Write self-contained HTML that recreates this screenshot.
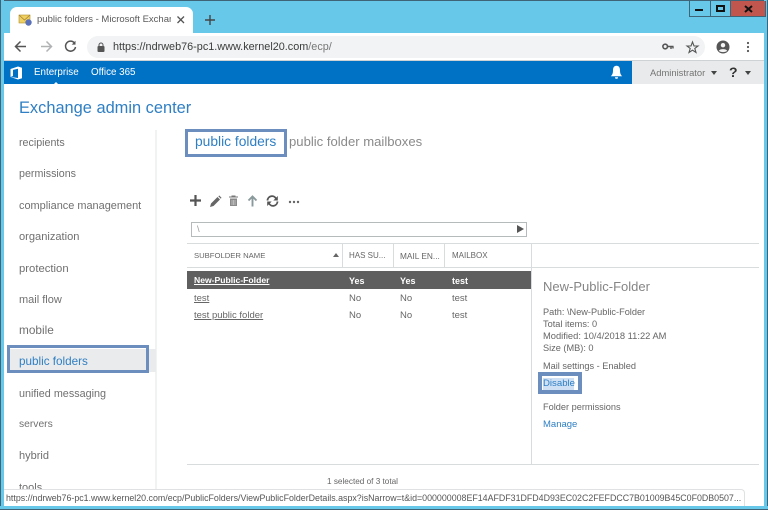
<!DOCTYPE html>
<html><head><meta charset="utf-8"><style>
html,body{margin:0;padding:0;width:768px;height:510px;overflow:hidden;background:#fff}
*{box-sizing:border-box}
body{font-family:"Liberation Sans",sans-serif;position:relative;filter:blur(.3px)}
.a{position:absolute;white-space:nowrap}
.nav{position:absolute;left:19px;font-size:11px;color:#707070;white-space:nowrap;line-height:16px}
.t{position:absolute;font-size:9.5px;line-height:12px;color:#666;white-space:nowrap}
.b{position:absolute;background:#d9dcdc}
.d{position:absolute;left:543px;font-size:9.2px;line-height:12px;color:#666;white-space:nowrap}
.hl{position:absolute;border:3px solid #6c8ebf}
svg{position:absolute;overflow:visible}
</style></head><body>
<!-- window frame -->
<div class="a" style="left:0;top:0;width:768px;height:33px;background:#67c8ea"></div>
<div class="a" style="left:0;top:0;width:768px;height:1px;background:#3f6478"></div>
<div class="a" style="left:0;top:0;width:4px;height:510px;background:#67c8ea"></div>
<div class="a" style="left:0;top:0;width:1px;height:510px;background:#3f6478"></div>
<div class="a" style="left:764px;top:0;width:4px;height:510px;background:#67c8ea"></div>
<div class="a" style="left:767px;top:0;width:1px;height:510px;background:#3f6478"></div>
<div class="a" style="left:0;top:506px;width:768px;height:4px;background:#67c8ea"></div>
<div class="a" style="left:0;top:509px;width:768px;height:1px;background:#3f6478"></div>
<!-- window buttons -->
<div class="a" style="left:689px;top:1px;width:22px;height:16px;background:#67c8ea;border:1px solid #3f6478;border-top:0"></div>
<div class="a" style="left:695px;top:9px;width:8px;height:2px;background:#111"></div>
<div class="a" style="left:710px;top:1px;width:21px;height:16px;background:#67c8ea;border:1px solid #3f6478;border-top:0"></div>
<div class="a" style="left:716px;top:5px;width:9px;height:7px;border:2px solid #111"></div>
<div class="a" style="left:731px;top:1px;width:35px;height:16px;background:#c0564e;border-bottom:1px solid #3f6478;border-right:1px solid #3f6478"></div>
<svg style="left:744px;top:5px" width="10" height="8"><path d="M1 1L8 7M8 1L1 7" stroke="#111" stroke-width="2" fill="none"/></svg>
<!-- tab -->
<div class="a" style="left:10px;top:7px;width:183px;height:27px;background:#fff;border-radius:7px 7px 0 0"></div>
<svg style="left:19px;top:14px" width="14" height="13"><rect x="0" y="1" width="11" height="8" fill="#f0d060" stroke="#b09030" stroke-width=".6"/><path d="M0 1L5.5 6L11 1" stroke="#a08030" stroke-width=".7" fill="none"/><circle cx="9.5" cy="8.5" r="3.2" fill="#5a70b8"/></svg>
<div class="a" style="left:37px;top:13px;font-size:9.5px;line-height:14px;color:#5a5a5a;width:134px;overflow:hidden">public folders - Microsoft Exchan</div>
<svg style="left:176px;top:15px" width="10" height="10"><path d="M1.5 1.5L8 8M8 1.5L1.5 8" stroke="#555" stroke-width="1.3" fill="none"/></svg>
<svg style="left:204px;top:14px" width="12" height="12"><path d="M6 1V11M1 6H11" stroke="#444" stroke-width="1.4" fill="none"/></svg>
<!-- toolbar -->
<div class="a" style="left:4px;top:33px;width:760px;height:28px;background:#fff;border-bottom:1px solid #cfd2d4"></div>
<svg style="left:14px;top:40px" width="13" height="13"><path d="M12 6.5H2M6.5 1.5L1.5 6.5L6.5 11.5" stroke="#555" stroke-width="1.5" fill="none"/></svg>
<svg style="left:40px;top:40px" width="13" height="13"><path d="M1 6.5H11M6.5 1.5L11.5 6.5L6.5 11.5" stroke="#b0b2b4" stroke-width="1.5" fill="none"/></svg>
<svg style="left:64px;top:40px" width="13" height="13"><path d="M10.6 3.2A5 5 0 1 0 11.5 7" stroke="#555" stroke-width="1.5" fill="none"/><path d="M11.5 0.8V4.6H7.7Z" fill="#555"/></svg>
<div class="a" style="left:87px;top:36px;width:618px;height:22px;background:#f1f3f4;border-radius:11px"></div>
<svg style="left:97px;top:42px" width="9" height="11"><rect x="0.5" y="4" width="7" height="6" rx="1" fill="#555"/><path d="M2 4V3A2 2 0 0 1 6 3V4" stroke="#555" fill="none"/></svg>
<div class="a" style="left:113px;top:40px;font-size:10.85px;line-height:14px;color:#3c3c3c">https://ndrweb76-pc1.www.kernel20.com<span style="color:#777">/ecp/</span></div>
<svg style="left:662px;top:43px" width="12" height="8"><circle cx="3.2" cy="3.5" r="2.3" fill="none" stroke="#555" stroke-width="1.6"/><path d="M5 3.5H11.5M9 3.5V6M11 3.5V5.5" stroke="#555" stroke-width="1.4" fill="none"/></svg>
<svg style="left:686px;top:41px" width="13" height="13"><path d="M6.5 1L8 5H12L8.8 7.5L10 11.5L6.5 9.2L3 11.5L4.2 7.5L1 5H5Z" fill="none" stroke="#555" stroke-width="1.1"/></svg>
<svg style="left:716px;top:40px" width="14" height="14"><circle cx="7" cy="7" r="6.5" fill="#555"/><circle cx="7" cy="5.2" r="2.2" fill="#f4f4f4"/><path d="M2.8 10.8C4 8.5 10 8.5 11.2 10.8C9.5 12.6 4.5 12.6 2.8 10.8Z" fill="#f4f4f4"/></svg>
<svg style="left:746px;top:41px" width="4" height="12"><circle cx="2" cy="2" r="1.1" fill="#555"/><circle cx="2" cy="6" r="1.1" fill="#555"/><circle cx="2" cy="10" r="1.1" fill="#555"/></svg>
<!-- suite bar -->
<div class="a" style="left:4px;top:61px;width:628px;height:23px;background:#0072c6"></div>
<div class="a" style="left:632px;top:61px;width:132px;height:23px;background:#e9eaeb"></div>
<svg style="left:10px;top:66px" width="13" height="14"><path d="M0.5 3L8 0.5L12 1.7V12.3L8 13.5L0.5 11L8 12V2.8L3 3.9V10L0.5 11Z" fill="#fff"/></svg>
<div class="a" style="left:34px;top:66px;font-size:9.8px;line-height:14px;color:#fff">Enterprise</div>
<div class="a" style="left:91px;top:66px;font-size:9.8px;line-height:14px;color:#fff">Office 365</div>
<div class="a" style="left:53px;top:82px;width:0;height:0;border:3px solid transparent;border-top:0;border-bottom-color:#fff"></div>
<svg style="left:610px;top:65px" width="13" height="15"><path d="M6.5 0.8C3.8 0.8 3 3 3 5.5C3 8.5 2.2 10 0.8 11.3H12.2C10.8 10 10 8.5 10 5.5C10 3 9.2 0.8 6.5 0.8Z" fill="#fff"/><path d="M5 12.2H8A1.5 1.6 0 0 1 5 12.2Z" fill="#fff"/></svg>
<div class="a" style="left:650px;top:66px;font-size:9.4px;line-height:13px;color:#747474">Administrator</div>
<div class="a" style="left:711px;top:71px;width:0;height:0;border:3px solid transparent;border-bottom:0;border-top:4px solid #444"></div>
<div class="a" style="left:729px;top:63px;font-size:14px;font-weight:bold;line-height:18px;color:#333">?</div>
<div class="a" style="left:745px;top:71px;width:0;height:0;border:3px solid transparent;border-bottom:0;border-top:4px solid #444"></div>
<!-- content -->
<div class="a" style="left:19px;top:98px;font-size:16.4px;line-height:21px;color:#2f7fc4">Exchange admin center</div>
<div class="a" style="left:155px;top:130px;width:2px;height:376px;background:#f1f2f2"></div>
<div class="nav" style="top:135px;font-size:10.7px">recipients</div>
<div class="nav" style="top:166px;font-size:10.7px">permissions</div>
<div class="nav" style="top:198px;font-size:10.95px">compliance management</div>
<div class="nav" style="top:229px;font-size:11.1px">organization</div>
<div class="nav" style="top:261px;font-size:11.3px">protection</div>
<div class="nav" style="top:292px;font-size:11px">mail flow</div>
<div class="nav" style="top:322px;font-size:11.8px">mobile</div>
<div class="a" style="left:8px;top:349px;width:148px;height:23px;background:#eaebec"></div>
<div class="hl" style="left:7px;top:345px;width:142px;height:28px"></div>
<div class="nav" style="top:354px;color:#2f7fc4;font-size:11.7px">public folders</div>
<div class="nav" style="top:386px;font-size:10.8px">unified messaging</div>
<div class="nav" style="top:417px;font-size:10.3px">servers</div>
<div class="nav" style="top:448px;font-size:11px">hybrid</div>
<div class="nav" style="top:480px;font-size:11px">tools</div>
<!-- tabs -->
<div class="hl" style="left:185px;top:129px;width:102px;height:28px;border-width:3px"></div>
<div class="a" style="left:195px;top:133px;font-size:13.8px;line-height:17px;color:#2f7fc4">public folders</div>
<div class="a" style="left:289px;top:133px;font-size:13.1px;line-height:17px;color:#8a8a8a">public folder mailboxes</div>
<!-- action icons -->
<svg style="left:189px;top:194px" width="13" height="13"><path d="M6.5 1V12M1 6.5H12" stroke="#555" stroke-width="2.2" fill="none"/></svg>
<svg style="left:209px;top:195px" width="13" height="13"><path d="M1 12L2 8.5L8.5 2L11 4.5L4.5 11Z" fill="#666"/><path d="M9.3 1.2L10.3 .5L12.5 2.7L11.8 3.7Z" fill="#666"/></svg>
<svg style="left:228px;top:195px" width="11" height="12"><path d="M1 2H10M4 2V1H7V2" stroke="#777" fill="none"/><path d="M2 3.5H9V11H2Z" fill="#8a8a8a"/><path d="M4 5V10M5.5 5V10M7 5V10" stroke="#ddd" stroke-width=".6"/></svg>
<svg style="left:247px;top:195px" width="11" height="12"><path d="M5.5 11.5V2M1.5 5.5L5.5 1.5L9.5 5.5" stroke="#8a9a9c" stroke-width="1.9" fill="none"/></svg>
<svg style="left:266px;top:195px" width="13" height="12"><path d="M1.5 5.5A4.5 4.5 0 0 1 10 3.6" stroke="#555" stroke-width="1.8" fill="none"/><path d="M11.8 1V5.5H7.3Z" fill="#555"/><path d="M11.5 6.5A4.5 4.5 0 0 1 3 8.4" stroke="#555" stroke-width="1.8" fill="none"/><path d="M1.2 11V6.5H5.7Z" fill="#555"/></svg>
<svg style="left:288px;top:200px" width="12" height="4"><circle cx="2" cy="2" r="1.2" fill="#666"/><circle cx="6" cy="2" r="1.2" fill="#666"/><circle cx="10" cy="2" r="1.2" fill="#666"/></svg>
<!-- path box -->
<div class="a" style="left:191px;top:222px;width:336px;height:15px;border:1px solid #b5baba;background:#fff"></div>
<div class="a" style="left:197px;top:224px;font-size:9.5px;line-height:11px;color:#999">\</div>
<div class="a" style="left:517px;top:225px;width:0;height:0;border-left:7px solid #555;border-top:4.5px solid transparent;border-bottom:4.5px solid transparent"></div>
<!-- grid header -->
<div class="b" style="left:187px;top:243px;width:572px;height:1px"></div>
<div class="b" style="left:187px;top:267px;width:572px;height:1px"></div>
<div class="b" style="left:342px;top:243px;width:1px;height:24px"></div>
<div class="b" style="left:393px;top:243px;width:1px;height:24px"></div>
<div class="b" style="left:444px;top:243px;width:1px;height:24px"></div>
<div class="b" style="left:531px;top:243px;width:1px;height:221px"></div>
<div class="t" style="left:194px;top:250px;font-size:7.7px">SUBFOLDER NAME</div>
<div class="a" style="left:333px;top:253px;width:0;height:0;border:3px solid transparent;border-top:0;border-bottom:4px solid #666"></div>
<div class="t" style="left:349px;top:250px;font-size:8px">HAS SU...</div>
<div class="t" style="left:400px;top:250px;font-size:8.3px">MAIL EN...</div>
<div class="t" style="left:452px;top:250px;font-size:8px">MAILBOX</div>
<!-- rows -->
<div class="a" style="left:187px;top:271px;width:344px;height:18px;background:#5f5f5f"></div>
<div class="t" style="left:194px;top:274px;color:#fff;font-weight:bold;font-size:8.6px;text-decoration:underline">New-Public-Folder</div>
<div class="t" style="left:349px;top:275px;color:#fff;font-weight:bold;font-size:9px">Yes</div>
<div class="t" style="left:400px;top:275px;color:#fff;font-weight:bold;font-size:9px">Yes</div>
<div class="t" style="left:452px;top:275px;color:#fff;font-weight:bold;font-size:9px">test</div>
<div class="t" style="left:194px;top:293px;text-decoration:underline">test</div>
<div class="t" style="left:349px;top:293px">No</div>
<div class="t" style="left:400px;top:293px">No</div>
<div class="t" style="left:452px;top:293px">test</div>
<div class="t" style="left:194px;top:310px;text-decoration:underline">test public folder</div>
<div class="t" style="left:349px;top:310px">No</div>
<div class="t" style="left:400px;top:310px">No</div>
<div class="t" style="left:452px;top:310px">test</div>
<!-- details -->
<div class="a" style="left:543px;top:278px;font-size:13px;line-height:17px;color:#858585">New-Public-Folder</div>
<div class="d" style="top:306px">Path: \New-Public-Folder</div>
<div class="d" style="top:318px">Total items: 0</div>
<div class="d" style="top:330px;font-size:9.35px">Modified: 10/4/2018 11:22 AM</div>
<div class="d" style="top:342px">Size (MB): 0</div>
<div class="d" style="top:360px">Mail settings - Enabled</div>
<div class="a" style="left:543px;top:378px;width:31px;height:12px;background:#cfe0f5"></div>
<div class="d" style="top:378px;color:#2f7fc4;font-size:9.6px">Disable</div>
<div class="hl" style="left:538px;top:372px;width:44px;height:22px;border-width:4px"></div>
<div class="d" style="top:401px">Folder permissions</div>
<div class="d" style="top:419px;color:#2f7fc4;font-size:9.5px">Manage</div>
<!-- footer -->
<div class="b" style="left:187px;top:464px;width:572px;height:1px"></div>
<div class="t" style="left:327px;top:476px;font-size:8.2px">1 selected of 3 total</div>
<!-- status -->
<div class="a" style="left:4px;top:489px;width:741px;height:17px;background:#fff;border:1px solid #dfe1e2;border-left:0;border-bottom:0;border-radius:0 4px 0 0"></div>
<div class="a" style="left:6px;top:492px;width:738px;overflow:hidden;font-size:8.85px;line-height:12px;color:#555">https://ndrweb76-pc1.www.kernel20.com/ecp/PublicFolders/ViewPublicFolderDetails.aspx?isNarrow=t&amp;id=000000008EF14AFDF31DFD4D93EC02C2FEFDCC7B01009B45C0F0DB0507...</div>
</body></html>
